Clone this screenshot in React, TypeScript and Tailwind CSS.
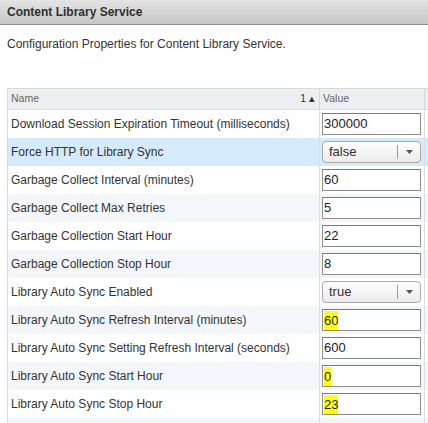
import React from 'react';

type Row = {
  name: string;
  value: string;
  kind?: 'select';
  mark?: boolean;
};

const ROWS: Row[] = [
  { name: 'Download Session Expiration Timeout (milliseconds)', value: '300000' },
  { name: 'Force HTTP for Library Sync', value: 'false', kind: 'select' },
  { name: 'Garbage Collect Interval (minutes)', value: '60' },
  { name: 'Garbage Collect Max Retries', value: '5' },
  { name: 'Garbage Collection Start Hour', value: '22' },
  { name: 'Garbage Collection Stop Hour', value: '8' },
  { name: 'Library Auto Sync Enabled', value: 'true', kind: 'select' },
  { name: 'Library Auto Sync Refresh Interval (minutes)', value: '60', mark: true },
  { name: 'Library Auto Sync Setting Refresh Interval (seconds)', value: '600' },
  { name: 'Library Auto Sync Start Hour', value: '0', mark: true },
  { name: 'Library Auto Sync Stop Hour', value: '23', mark: true },
];

function ValueCell({ row }: { row: Row }) {
  if (row.kind === 'select') {
    return (
      <div className="flex h-[22px] w-[99px] items-center rounded-[4px] border border-[#a9a9a9] bg-gradient-to-b from-white to-[#ebebeb]">
        <span className="flex-1 pl-[6px] text-[13px] text-[#3a2a2a]">{row.value}</span>
        <div className="h-[14px] w-px bg-[#9a9a9a]" />
        <div className="flex w-[22px] justify-center">
          <svg width="7" height="4" viewBox="0 0 7 4">
            <path d="M0 0h7L3.5 4z" fill="#555" />
          </svg>
        </div>
      </div>
    );
  }
  return (
    <div className="flex h-[22px] w-[99px] items-center border border-[#8f8f8f] border-t-[#7a7a7a] bg-white pl-px text-[13px] text-[#222]">
      {row.mark ? <span className="bg-[#ffff00] py-[2px] leading-[15px]">{row.value}</span> : row.value}
    </div>
  );
}

export default function App() {
  return (
    <div className="h-[423px] w-[428px] overflow-hidden bg-white font-['Liberation_Sans',Arial,sans-serif] text-[#333]">
      {/* Title bar */}
      <div className="flex h-[25px] items-center border-b border-[#8c8c8c] bg-gradient-to-b from-[#e4e4e4] to-[#c6c6c6] px-[7px]">
        <span className="text-[12px] font-bold text-[#2f2f2f]">Content Library Service</span>
      </div>

      <p className="px-[7px] pt-[12px] text-[12px] leading-[14px] text-[#333]">
        Configuration Properties for Content Library Service.
      </p>

      <div className="ml-[7px] mt-[37px] border-l border-t border-[#d9d9d9]">
        {/* Header */}
        <div className="grid h-[20px] grid-cols-[312px_105px_1fr] bg-[#eceff2] text-[10.5px] text-[#666]">
          <div className="flex items-center justify-between border-r border-[#d6d6d6] pl-[3px] pr-[4px]">
            <span>Name</span>
            <span className="text-[#333]">1 ▴</span>
          </div>
          <div className="flex items-center border-r border-[#d6d6d6] pl-[3px]">Value</div>
          <div />
        </div>
        <div className="border-t border-[#dcdcdc]" />

        {ROWS.map((row, i) => (
          <div
            key={row.name}
            className={`grid h-[28px] grid-cols-[312px_105px_1fr] ${
              i === 1 ? 'bg-[#d5eafb]' : i % 2 === 1 ? 'bg-[#f3f6fa]' : 'bg-white'
            }`}
          >
            <div className="flex items-center border-r border-[#dedede] pl-[3px] text-[12px] text-[#333]">
              {row.name}
            </div>
            <div className="flex items-center border-r border-[#dedede] pl-[2px]">
              <ValueCell row={row} />
            </div>
            <div />
          </div>
        ))}
        <div className="grid h-[28px] grid-cols-[312px_105px_1fr] bg-[#f3f6fa]">
          <div className="border-r border-[#dedede]" />
          <div className="border-r border-[#dedede]" />
          <div />
        </div>
      </div>
    </div>
  );
}
